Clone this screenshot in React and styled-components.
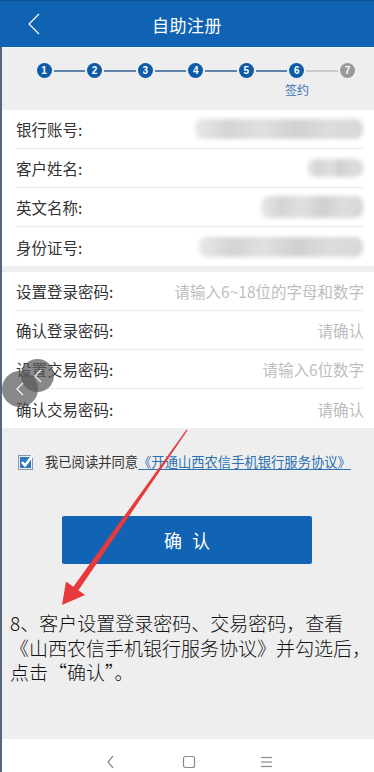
import React from "react";
import styled, { createGlobalStyle } from "styled-components";

const GlobalStyle = createGlobalStyle`
  html, body { margin: 0; padding: 0; background: #eeeeee; }
  body { font-family: "Noto Sans CJK SC", "Noto Sans", sans-serif; }
  * { box-sizing: border-box; }
`;

const Page = styled.div`
  position: relative;
  width: 374px;
  height: 772px;
  display: flex;
  flex-direction: column;
  overflow: hidden;
  background: #eeeeee;
`;

const Header = styled.header`
  height: 47px;
  flex: none;
  background: #0f63b2;
  border-top: 1px solid #0a4f94;
  display: flex;
  align-items: center;
  position: relative;
  justify-content: center;
`;

const BackBtn = styled.div`
  position: absolute;
  left: 26px;
  top: 11px;
  width: 16px;
  height: 24px;
  display: flex;
`;

const Title = styled.h1`
  margin: 0;
  color: #ffffff;
  font-size: 17px;
  font-weight: 400;
  letter-spacing: 0.5px;
`;

const Body = styled.main`
  flex: 1;
  display: flex;
  flex-direction: column;
  border-left: 2px solid #55657a;
`;

const Stepper = styled.div`
  height: 63px;
  display: flex;
  align-items: flex-start;
  padding: 16px 19px 0 34.5px;
`;

const Step = styled.div`
  width: 15px;
  flex: none;
  display: flex;
  flex-direction: column;
  align-items: center;
`;

const Dot = styled.div`
  width: 15px;
  height: 15px;
  border-radius: 50%;
  background: ${(p) => (p.$done ? "#0d5aa6" : "#9a9a9a")};
  color: #fff;
  font-family: "Liberation Sans", Arial, sans-serif;
  font-weight: 700;
  font-size: 10px;
  line-height: 15px;
  text-align: center;
`;

const StepLabel = styled.div`
  margin-top: 4px;
  font-size: 12px;
  line-height: 16px;
  color: #3775b3;
  white-space: nowrap;
`;

const Connector = styled.div`
  flex: 1;
  height: 1.5px;
  margin: 7px 2px 0;
  background: ${(p) => (p.$done ? "#5f82aa" : "#c9c9c9")};
`;

const Section = styled.section`
  background: #ffffff;
  margin-bottom: ${(p) => p.$gap || 0}px;
`;

const Row = styled.div`
  height: 39px;
  padding: 0 10px 0 13px;
  display: flex;
`;

const RowInner = styled.div`
  flex: 1;
  display: flex;
  align-items: center;
  justify-content: space-between;
  padding-left: 1px;
  border-bottom: ${(p) => (p.$last ? "none" : "1px solid #ececec")};
`;

const Label = styled.span`
  font-size: 15.5px;
  color: #333333;
  white-space: nowrap;
`;

const Placeholder = styled.span`
  font-size: 15.5px;
  color: #bdbdbd;
  white-space: nowrap;
`;

const Blurred = styled.div`
  width: ${(p) => p.$w}px;
  height: ${(p) => p.$h || 20}px;
  border-radius: 8px;
  background: linear-gradient(90deg, #e8e8e8 0%, #d4d4d4 20%, #e0e0e0 40%, #d0d0d0 60%, #dddddd 80%, #d6d6d6 100%);
  filter: blur(2px);
  margin-right: 1px;
`;

const AgreeRow = styled.div`
  display: flex;
  align-items: center;
  padding: 17px 0 0 16px;
  height: 50px;
  font-size: 13.3px;
  color: #333333;
`;

const Check = styled.div`
  width: 17px;
  height: 17px;
  margin-right: 10px;
  display: flex;
`;

const AgreeLink = styled.span`
  color: #2b70b3;
  text-decoration: underline;
  text-underline-offset: 2px;
`;

const ButtonWrap = styled.div`
  display: flex;
  justify-content: center;
  padding: 38px 0 0;
  margin-left: -2px;
`;

const ConfirmButton = styled.button`
  width: 250px;
  height: 48px;
  border: none;
  border-radius: 2px;
  background: #1164b3;
  color: #ffffff;
  font-family: inherit;
  font-size: 18px;
  letter-spacing: 3px;
  text-indent: 3px;
`;

const Note = styled.p`
  margin: 47px 0 0 8px;
  font-size: 19px;
  font-weight: 300;
  line-height: 24.5px;
  color: #111111;
  white-space: nowrap;
`;

const Spacer = styled.div`
  flex: 1;
`;

const NavBar = styled.nav`
  height: 33px;
  background: #ffffff;
  display: flex;
  align-items: center;
  justify-content: center;
  gap: 62px;
  padding-top: 12px;
  padding-left: 2px;
`;

const NavIcon = styled.div`
  width: 16px;
  height: 16px;
  display: flex;
`;

const FloatBubble = styled.div`
  position: absolute;
  left: ${(p) => p.$x}px;
  top: ${(p) => p.$y}px;
  width: ${(p) => p.$d}px;
  height: ${(p) => p.$d}px;
  border-radius: 50%;
  background: rgba(90, 90, 90, 0.72);
  display: flex;
  align-items: center;
  justify-content: center;
`;

const ArrowLayer = styled.svg`
  position: absolute;
  left: 0;
  top: 0;
  width: 374px;
  height: 772px;
  pointer-events: none;
`;

const steps = [1, 2, 3, 4, 5, 6, 7];

function Chevron({ color = "#fff", w = 1.2 }) {
  return (
    <svg width="100%" height="100%" viewBox="0 0 16 24">
      <polyline points="13,2 3,12 13,22" fill="none" stroke={color} strokeWidth={w} />
    </svg>
  );
}

export default function App() {
  const infoRows = [
    { label: "银行账号:", w: 168, h: 20 },
    { label: "客户姓名:", w: 56, h: 18 },
    { label: "英文名称:", w: 102, h: 22 },
    { label: "身份证号:", w: 164, h: 20 },
  ];
  const pwdRows = [
    { label: "设置登录密码:", ph: "请输入6~18位的字母和数字" },
    { label: "确认登录密码:", ph: "请确认" },
    { label: "设置交易密码:", ph: "请输入6位数字" },
    { label: "确认交易密码:", ph: "请确认" },
  ];
  return (
    <>
      <GlobalStyle />
      <Page>
        <Header>
          <BackBtn>
            <Chevron />
          </BackBtn>
          <Title>自助注册</Title>
        </Header>
        <Body>
          <Stepper>
            {steps.map((n, i) => (
              <React.Fragment key={n}>
                {i > 0 && <Connector $done={n <= 6} />}
                <Step>
                  <Dot $done={n <= 6}>{n}</Dot>
                  {n === 6 && <StepLabel>签约</StepLabel>}
                </Step>
              </React.Fragment>
            ))}
          </Stepper>
          <Section $gap={6}>
            {infoRows.map((r, i) => (
              <Row key={r.label}>
                <RowInner $last={i === infoRows.length - 1}>
                  <Label>{r.label}</Label>
                  <Blurred $w={r.w} $h={r.h} />
                </RowInner>
              </Row>
            ))}
          </Section>
          <Section>
            {pwdRows.map((r, i) => (
              <Row key={r.label}>
                <RowInner $last={i === pwdRows.length - 1}>
                  <Label>{r.label}</Label>
                  <Placeholder>{r.ph}</Placeholder>
                </RowInner>
              </Row>
            ))}
          </Section>
          <AgreeRow>
            <Check>
              <svg width="17" height="17" viewBox="0 0 17 17">
                <rect x="0.5" y="2.5" width="14" height="14" fill="#e9eef4" stroke="#8796a8" />
                <rect x="2" y="4" width="11" height="11" fill="#2f78c0" />
                <polyline points="4,9 7,12.5 15,2" fill="none" stroke="#ffffff" strokeWidth="2.6" />
              </svg>
            </Check>
            <span>我已阅读并同意</span>
            <AgreeLink>《开通山西农信手机银行服务协议》</AgreeLink>
          </AgreeRow>
          <ButtonWrap>
            <ConfirmButton>确 认</ConfirmButton>
          </ButtonWrap>
          <Note>
            8、客户设置登录密码、交易密码，查看
            <br />
            《山西农信手机银行服务协议》并勾选后，
            <br />
            点击“确认”。
          </Note>
          <Spacer />
          <NavBar>
            <NavIcon>
              <svg width="16" height="16" viewBox="0 0 16 16">
                <polyline points="10,2 5,8 10,14" fill="none" stroke="#8a8a8a" strokeWidth="1.2" />
              </svg>
            </NavIcon>
            <NavIcon>
              <svg width="16" height="16" viewBox="0 0 16 16">
                <rect x="2.5" y="2.5" width="11" height="11" rx="2" fill="none" stroke="#8a8a8a" strokeWidth="1.2" />
              </svg>
            </NavIcon>
            <NavIcon>
              <svg width="16" height="16" viewBox="0 0 16 16">
                <line x1="2" y1="3.5" x2="13" y2="3.5" stroke="#8a8a8a" strokeWidth="1.2" />
                <line x1="2" y1="8" x2="13" y2="8" stroke="#8a8a8a" strokeWidth="1.2" />
                <line x1="2" y1="12.5" x2="13" y2="12.5" stroke="#8a8a8a" strokeWidth="1.2" />
              </svg>
            </NavIcon>
          </NavBar>
        </Body>

        <FloatBubble $x={21} $y={359} $d={33}>
          <svg width="12" height="16" viewBox="0 0 12 16">
            <polyline points="9,2 3,8 9,14" fill="none" stroke="#eeeeee" strokeWidth="1.3" />
          </svg>
        </FloatBubble>
        <FloatBubble $x={2} $y={371} $d={36}>
          <svg width="12" height="16" viewBox="0 0 12 16">
            <polyline points="9,2 3,8 9,14" fill="none" stroke="#eeeeee" strokeWidth="1.3" />
          </svg>
        </FloatBubble>

        <ArrowLayer viewBox="0 0 374 772">
          <polygon
            points="187.6,430.3 186.4,429.7 72.3,588.2 77.4,591.8"
            fill="#e63a3c"
          />
          <polygon points="62,605 66,581.5 85,595" fill="#e63a3c" />
        </ArrowLayer>
      </Page>
    </>
  );
}
